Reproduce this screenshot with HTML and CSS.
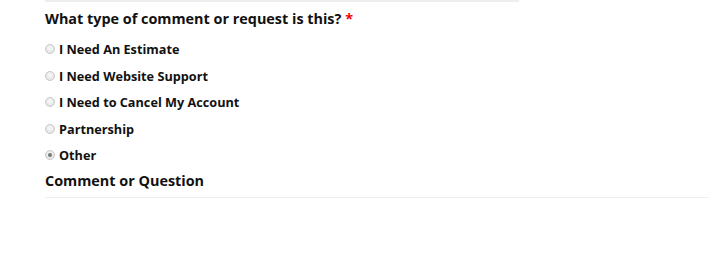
FILE: index.html
```html
<!DOCTYPE html>
<html lang="en">
<head>
    <meta charset="UTF-8">
    <meta name="viewport" content="width=device-width, initial-scale=1.0">
    <title>Contact</title>
    <link rel="stylesheet" href="styles.css">
</head>
<body>
    <div class="form">
        <div class="top-rule"></div>
        <div class="field">
            <div class="field-label">What type of comment or request is this? <span class="required">*</span></div>
            <ul class="choices">
                <li><span class="radio"></span>I Need An Estimate</li>
                <li><span class="radio"></span>I Need Website Support</li>
                <li><span class="radio"></span>I Need to Cancel My Account</li>
                <li><span class="radio"></span>Partnership</li>
                <li><span class="radio checked"></span>Other</li>
            </ul>
        </div>
        <div class="field comment">
            <div class="field-label big">Comment or Question</div>
        </div>
    </div>
</body>
</html>
```

FILE: styles.css
```css
body {
    font-family: "Open Sans", Arial, sans-serif;
    background-color: #fff;
    color: #111;
    margin: 0;
}
.form {
    margin-left: 45px;
}
.top-rule {
    width: 474px;
    height: 2px;
    background-color: #eee;
}
.field-label {
    font-weight: 700;
    font-size: 14.4px;
    line-height: 20px;
    margin-top: 7px;
}
.field-label.big {
    margin-top: 2px;
}
.required {
    color: #e00;
}
.choices {
    list-style: none;
    margin: 7px 0 0;
    padding: 0;
}
.choices li {
    display: flex;
    align-items: center;
    height: 26.5px;
    font-size: 12.7px;
    font-weight: 700;
}
.radio {
    width: 10px;
    height: 10px;
    box-sizing: border-box;
    border-radius: 50%;
    border: 1px solid #c8c8c8;
    background: radial-gradient(circle at 50% 40%, #fafafa, #dcdcdc);
    margin-right: 4px;
    position: relative;
}
.radio.checked::after {
    content: "";
    position: absolute;
    left: 2px;
    top: 2px;
    width: 4px;
    height: 4px;
    border-radius: 50%;
    background-color: #777;
}
.comment {
    width: 664px;
    border-bottom: 1px solid #eee;
    padding-bottom: 6px;
}
```
